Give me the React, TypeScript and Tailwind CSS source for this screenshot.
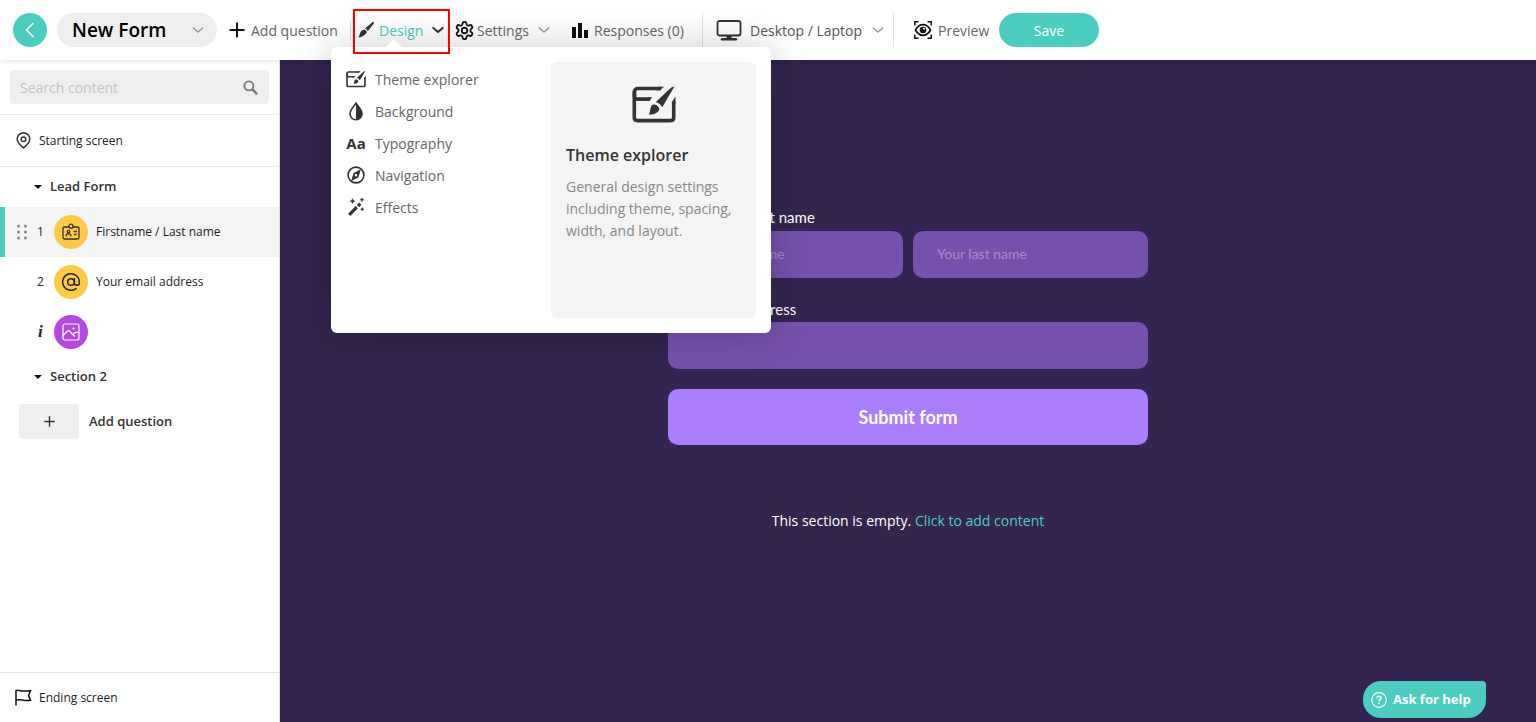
import type { ReactNode } from "react";
import { AtSign } from "lucide-react";

const menu = [
  { label: "Theme explorer", icon: <ThemeIcon className="h-5 w-5" /> },
  { label: "Background", icon: <DropIcon /> },
  { label: "Typography", icon: <span className="text-[15px] font-bold">Aa</span> },
  { label: "Navigation", icon: <CompassIcon /> },
  { label: "Effects", icon: <WandIcon /> },
];

const questions = [
  { id: "1", label: "Firstname / Last name", color: "bg-[#ffca45]", icon: <BadgeIcon />, selected: true },
  { id: "2", label: "Your email address", color: "bg-[#ffca45]", icon: <AtSign size={20} strokeWidth={1.8} />, selected: false },
];

function Chevron({ className = "stroke-[1.5] text-[#999]" }: { className?: string }) {
  return (
    <svg viewBox="0 0 12 8" className={`h-2 w-3 shrink-0 ${className}`} fill="none" stroke="currentColor">
      <path d="M1.300 2l4.700 4 4.700-4" strokeLinecap="round" strokeLinejoin="round" />
    </svg>
  );
}

function PlusIcon({ className }: { className: string }) {
  return (
    <svg viewBox="0 0 16 16" className={className} fill="none" stroke="currentColor">
      <path d="M8 .5v15M.5 8h15" />
    </svg>
  );
}

function BrushIcon() {
  return (
    <svg viewBox="0 0 16 16" className="h-4 w-4 shrink-0" fill="#333">
      <path d="M15.700.3c.4.400.2 1-.1 1.500L9.800 9.300C9.400 8.100 8.200 6.900 7 6.500L14.100.5c.6-.5 1.200-.6 1.600-.2z" />
      <path d="M6.100 7.400c1.400.3 2.500 1.500 2.700 2.800-.7 1.500-1.400 2.100-2.600 3-1.600 1.200-3.800 2-6 2.100 1.200-1.400 1.300-2.400 1.800-3.900.6-1.900 2-3.900 4.100-4z" />
    </svg>
  );
}

function ThemeIcon({ className }: { className: string }) {
  return (
    <svg viewBox="0 0 44 44" className={className}>
      <g fill="none" stroke="#333" strokeWidth="3.600">
        <path d="M29 6.500H6a3.500 3.500 0 0 0-3.700 3.500v25.500c0 2 1.300 3.100 3.300 3.100h32.800c2 0 3.300-1.200 3.300-3.100V20" />
        <path d="M2.500 9v5.500c0 1.600 1 2.600 2.800 2.600H18" />
      </g>
      <path fill="#333" d="M27 4.700h5l-4 3.600h-5zM16 15.300h4.300l-3 3.600H14zM43.500 14.500v7h-3.600v-1.500z" />
      <path fill="#333" d="M42.600 4.200L30.200 25.300c-1.400-2.700-3.600-4.600-6.400-5.300L39.200 5.500zM21.800 22.600c2.800 0 5.300 2.300 5.600 4.900-1.600 3.700-5.300 5.300-10.600 5 1.600-2.500.9-4.300 1.900-7.100.6-1.600 1.500-2.600 3.100-2.800z" />
    </svg>
  );
}

function DropIcon() {
  return (
    <svg viewBox="0 0 20 20" className="h-5 w-5">
      <path d="M10 2.200C8 5.200 4 8.700 4 12.700a6 6 0 0 0 12 0C16 8.700 12 5.200 10 2.200z" fill="none" stroke="#333" strokeWidth="1.600" />
      <path d="M10 2.200c2 3 6 6.500 6 10.500a6 6 0 0 1-6 6z" fill="#333" />
    </svg>
  );
}

function CompassIcon() {
  return (
    <svg viewBox="0 0 20 20" className="h-5 w-5">
      <circle cx="10" cy="10" r="7.900" fill="none" stroke="#333" strokeWidth="1.600" />
      <path fillRule="evenodd" fill="#333" d="M14.900 4.300l-2.500 8.100-7.300 3.700 2.500-8.100zM10 9a1.200 1.200 0 1 0 0 2.400A1.200 1.200 0 0 0 10 9z" />
    </svg>
  );
}

function WandIcon() {
  return (
    <svg viewBox="0 0 20 20" className="h-5 w-5" stroke="#333" fill="#333">
      <path d="M3.200 17.800l7.600-7.600M12 9l2.300-2.300" strokeWidth="3.200" fill="none" />
      <path strokeWidth=".6" d="M6.500 1.700l.7 1.700 1.700.7-1.700.7-.7 1.700-.7-1.700-1.700-.7 1.700-.7zM16 1l.5 1.300 1.300.5-1.300.5L16 4.600l-.5-1.300-1.300-.5 1.300-.5zM16.300 10.500l.5 1.200 1.200.5-1.200.5-.5 1.200-.5-1.200-1.200-.5 1.200-.5z" />
    </svg>
  );
}

function GearIcon() {
  return (
    <svg viewBox="1 1 22 22" className="h-[19px] w-[19px] shrink-0" fill="none" stroke="#111" strokeWidth="2.100">
      <path d="M12.220 2h-.44a2 2 0 0 0-2 2v.18a2 2 0 0 1-1 1.730l-.43.25a2 2 0 0 1-2 0l-.15-.08a2 2 0 0 0-2.730.73l-.22.38a2 2 0 0 0 .73 2.730l.15.1a2 2 0 0 1 1 1.720v.51a2 2 0 0 1-1 1.740l-.15.09a2 2 0 0 0-.73 2.730l.22.38a2 2 0 0 0 2.730.73l.15-.08a2 2 0 0 1 2 0l.43.25a2 2 0 0 1 1 1.730V20a2 2 0 0 0 2 2h.44a2 2 0 0 0 2-2v-.18a2 2 0 0 1 1-1.730l.43-.25a2 2 0 0 1 2 0l.15.08a2 2 0 0 0 2.730-.73l.22-.39a2 2 0 0 0-.73-2.730l-.15-.08a2 2 0 0 1-1-1.740v-.5a2 2 0 0 1 1-1.740l.15-.09a2 2 0 0 0 .73-2.730l-.22-.38a2 2 0 0 0-2.730-.73l-.15.08a2 2 0 0 1-2 0l-.43-.25a2 2 0 0 1-1-1.730V4a2 2 0 0 0-2-2z" />
      <circle cx="12" cy="12" r="3.200" />
    </svg>
  );
}

function PinIcon() {
  return (
    <svg viewBox="0 0 17 17" className="h-[17px] w-[17px]" fill="none" stroke="#333" strokeWidth="1.500">
      <path d="M8.500 16c-1.300-1.400-6.300-4.400-6.300-8.900a6.300 6.300 0 0 1 12.600 0c0 4.500-5 7.500-6.300 8.900z" strokeLinejoin="round" />
      <circle cx="8.500" cy="7.200" r="2.300" />
    </svg>
  );
}

function BadgeIcon() {
  return (
    <svg viewBox="0 0 20 20" className="h-5 w-5" fill="none" stroke="#333" strokeWidth="1.300">
      <path d="M8 5H3.500C2.400 5 2 5.700 2 6.500v9c0 .9.500 1.500 1.500 1.500h13c1 0 1.500-.6 1.500-1.500v-9c0-.9-.5-1.500-1.500-1.500H12" />
      <circle cx="10" cy="4.200" r="2" />
      <circle cx="7.500" cy="9.600" r="1.300" />
      <path d="M5 14.300c.2-1.700 1.200-2.600 2.500-2.600s2.300.9 2.500 2.600M12.500 9.500H16M13 12.500h2.500" />
    </svg>
  );
}

function PictureIcon() {
  return (
    <svg viewBox="0 0 20 20" className="h-5 w-5" fill="none" stroke="currentColor" strokeWidth="1.200">
      <rect x="2" y="2" width="16" height="16" rx="2" />
      <path d="M2 13.500L6.500 9c.6-.6 1.400-.6 2 0l3.500 4c.6-2 3-3.700 6-2.200M11.500 12.300l2.300 2.200" />
      <circle cx="12.500" cy="6.500" r=".5" fill="currentColor" />
    </svg>
  );
}

function MonitorIcon() {
  return (
    <svg viewBox="0 0 26 22" className="h-[22px] w-[26px] shrink-0" fill="none" stroke="#333" strokeWidth="1.800">
      <rect x="1.500" y="2" width="23" height="14.500" rx="2" />
      <path d="M6 20.300h14" strokeWidth="2.400" strokeLinecap="round" />
      <path d="M13 17v3" strokeWidth="5" />
    </svg>
  );
}

function PreviewIcon() {
  return (
    <svg viewBox="0 0 18 18" className="h-[18px] w-[18px] shrink-0" fill="none" stroke="#111">
      <path strokeWidth="1.500" d="M.8 4.500V.8h3.700M13.500.8h3.700v3.700M17.200 13.500v3.700h-3.700M4.500 17.200H.8v-3.700" />
      <path strokeWidth="1.700" d="M1.500 9C3.400 5.500 6 3.700 9 3.700s5.600 1.800 7.500 5.300c-1.900 3.500-4.500 5.300-7.500 5.300S3.400 12.500 1.500 9z" />
      <circle cx="9" cy="9" r="3.300" fill="#111" stroke="none" />
      <circle cx="10" cy="7.800" r="1" fill="#fff" stroke="none" />
    </svg>
  );
}

function Circle({ color, children }: { color: string; children: ReactNode }) {
  return <span className={`flex h-[34px] w-[34px] shrink-0 items-center justify-center rounded-full ${color}`}>{children}</span>;
}

function SectionTitle({ children }: { children: ReactNode }) {
  return (
    <button className="flex h-10 w-full items-center gap-2 pl-[34px] text-[13px] font-semibold text-[#333]">
      <svg viewBox="0 0 8 4" className="h-1 w-2" fill="#111">
        <path d="M0 0h8L4 4z" />
      </svg>
      {children}
    </button>
  );
}

function DesignMenu() {
  return (
    <div className="absolute top-[47px] -left-5 z-20 flex w-[440px] rounded-md bg-white p-[15px] shadow-[0_0_40px_rgba(0,0,0,0.2)]">
      <div className="absolute -top-2 left-[55px] h-0 w-0 border-x-8 border-b-8 border-x-transparent border-b-white" />
      <ul className="flex w-[205px] flex-col pt-px">
        {menu.map((m) => (
          <li key={m.label}>
            <button className="flex h-8 items-center gap-[9px] text-[14px] text-[#666]">
              <span className="flex w-5 justify-center text-[#333]">{m.icon}</span>
              {m.label}
            </button>
          </li>
        ))}
      </ul>
      <div className="h-64 flex-1 rounded-md bg-[#f4f4f4] px-[15px] pt-5">
        <ThemeIcon className="mx-auto h-11 w-11" />
        <h3 className="mt-[17px] text-base leading-6 font-semibold text-[#333]">Theme explorer</h3>
        <p className="mt-[9px] text-[14px] leading-[22px] text-[#888]">
          General design settings including theme, spacing, width, and layout.
        </p>
      </div>
    </div>
  );
}

function Header() {
  return (
    <header className="relative z-10 flex h-[60px] shrink-0 items-center bg-white pl-[13px] text-[14px] text-[#666] shadow-[0_0_6px_rgba(0,0,0,0.15)]">
      <button aria-label="Back" className="flex h-[34px] w-[34px] items-center justify-center rounded-full bg-[#4bcdc1]">
        <svg viewBox="0 0 10 16" className="h-4 w-[10px]" fill="none" stroke="#fff" strokeWidth="1.500">
          <path d="M8.500 1L1.500 8l7 7" />
        </svg>
      </button>
      <button className="ml-[10px] flex h-[34px] w-40 items-center justify-between rounded-full bg-[#eee] pr-[13px] pl-[15px] text-[19px] font-semibold text-black">
        New Form
        <Chevron />
      </button>
      <button className="ml-3 flex w-[121px] items-center gap-[6px] whitespace-nowrap">
        <PlusIcon className="h-4 w-4 shrink-0 stroke-2 text-[#111]" />
        Add question
      </button>
      <div className="h-[18px] w-px bg-[#ddd]" />
      <div className="relative flex h-[60px] w-[104px] items-center">
        <button className="flex w-full items-center pl-[7px] text-[#4bcdc1]">
          <BrushIcon />
          <span className="ml-[5px] flex-1 text-left">Design</span>
          <Chevron className="mr-[11px] stroke-2 text-[#333]" />
        </button>
        <DesignMenu />
        <div className="pointer-events-none absolute top-[9px] left-[2px] z-30 h-[45px] w-[97px] border-2 border-[#f00]" />
      </div>
      <button className="flex w-[95px] items-center">
        <GearIcon />
        <span className="ml-[3px] flex-1 text-left">Settings</span>
        <Chevron />
      </button>
      <button className="ml-[22px] flex w-[130px] items-center gap-[6px] whitespace-nowrap">
        <svg viewBox="0 0 16 15" className="h-[15px] w-4 shrink-0" fill="#111">
          <path d="M0 4h4v11H0zM6 0h4v15H6zM12 7h4v8h-4z" />
        </svg>
        Responses (0)
      </button>
      <div className="h-[34px] w-px bg-[#e3e3e3]" />
      <button className="ml-[13px] flex w-[168px] items-center whitespace-nowrap">
        <MonitorIcon />
        <span className="ml-2 flex-1 text-left font-medium text-[#555]">Desktop / Laptop</span>
        <Chevron />
      </button>
      <div className="ml-[9px] h-[34px] w-px bg-[#e3e3e3]" />
      <button className="ml-5 flex w-[85px] items-center gap-[6px]">
        <PreviewIcon />
        Preview
      </button>
      <button className="h-[34px] w-[100px] rounded-full bg-[#4bcdc1] text-white">Save</button>
    </header>
  );
}

function Sidebar() {
  return (
    <aside className="flex w-[280px] shrink-0 flex-col border-r border-[#ddd] bg-white text-[12px] text-[#222]">
      <div className="border-b border-[#e8e8e8] p-[10px]">
        <div className="flex h-[34px] items-center rounded bg-[#efefef] pr-[11px] pl-[10px]">
          <input
            type="search"
            aria-label="Search content"
            placeholder="Search content"
            className="min-w-0 flex-1 bg-transparent text-[14px] outline-none placeholder:text-[#c4c4c4]"
          />
          <svg viewBox="0 0 16 16" className="h-[15px] w-[15px]" fill="none" stroke="#777">
            <circle cx="6.300" cy="6.300" r="4.800" strokeWidth="2" />
            <path d="M10 10l5 5" strokeWidth="2.600" />
          </svg>
        </div>
      </div>
      <button className="flex h-[52px] items-center gap-[7px] border-b border-[#e8e8e8] pl-[15px]">
        <PinIcon />
        Starting screen
      </button>
      <SectionTitle>Lead Form</SectionTitle>
      <ul>
        {questions.map((q) => (
          <li
            key={q.id}
            className={`flex h-[50px] items-center ${q.selected ? "border-l-[5px] border-[#4bcdc1] bg-[#f4f4f4]" : "pl-[5px]"}`}
          >
            <span className="flex w-8 justify-start pl-3">
              {q.selected && (
                <svg viewBox="0 0 10 16" className="h-4 w-[10px]" fill="#888">
                  <circle cx="1.500" cy="2" r="1.500" />
                  <circle cx="8.500" cy="2" r="1.500" />
                  <circle cx="1.500" cy="8" r="1.500" />
                  <circle cx="8.500" cy="8" r="1.500" />
                  <circle cx="1.500" cy="14" r="1.500" />
                  <circle cx="8.500" cy="14" r="1.500" />
                </svg>
              )}
            </span>
            <span className="w-[17px]">{q.id}</span>
            <Circle color={q.color}>{q.icon}</Circle>
            <span className="ml-2">{q.label}</span>
          </li>
        ))}
        <li className="flex h-[50px] items-center pl-[38px]">
          <span className="w-4 font-['Liberation_Serif',serif] text-[17px] font-bold italic">i</span>
          <Circle color="bg-[#b348e4] text-white">
            <PictureIcon />
          </Circle>
        </li>
      </ul>
      <SectionTitle>Section 2</SectionTitle>
      <button className="mt-[7px] flex items-center gap-[10px] pl-[19px] text-[13px] font-semibold text-[#333]">
        <span className="flex h-[35px] w-[60px] items-center justify-center rounded bg-[#efefef]">
          <PlusIcon className="h-[11px] w-[11px] stroke-2" />
        </span>
        Add question
      </button>
      <button className="mt-auto flex h-[50px] items-center gap-[7px] border-t border-[#e3e3e3] pl-[15px]">
        <svg viewBox="0 0 17 17" className="h-[17px] w-[17px]" fill="none" stroke="#111" strokeWidth="1.500">
          <path d="M1 16.500V1.500c3-.8 4.500.6 7.500.6 2.500 0 4.500-.3 7-.3l-2 4.600 2 4.800c-3 .4-5 .2-7 0-2.500-.4-4.500-.9-7.500-.1" />
        </svg>
        Ending screen
      </button>
    </aside>
  );
}

const field = "h-[47px] w-full min-w-0 rounded-[10px] bg-[#7551ad] px-6 pb-[3px] text-[14px] text-white outline-none placeholder:text-[#a58bcb]";

function Canvas() {
  return (
    <main className="relative flex-1 bg-[#342450]">
      <form className="mx-auto w-[480px] pt-[146px] font-['Lato',sans-serif] text-white">
        <label htmlFor="first" className="mb-[3px] block text-[15px] leading-[22px]">
          Firstname / Last name
        </label>
        <div className="flex gap-[10px]">
          <input id="first" className={field} placeholder="Your first name" />
          <input aria-label="Last name" className={field} placeholder="Your last name" />
        </div>
        <label htmlFor="email" className="mt-5 mb-[2px] block text-[15px] leading-[22px]">
          Your e-mail address
        </label>
        <input id="email" type="email" className={field} />
        <button type="button" className="mt-5 h-14 w-full rounded-[10px] bg-[#ac7dff] text-[18px] font-bold">
          Submit form
        </button>
      </form>
      <p className="mt-16 text-center text-[14px] leading-6 text-white">
        This section is empty.{" "}
        <a href="#" className="text-[#4bcdc1]">
          Click to add content
        </a>
      </p>
      <button className="absolute right-[50px] bottom-1 flex h-[37px] w-[123px] items-center gap-[6px] rounded-[18px] rounded-tr bg-[#4bcdc1] pl-2 text-[13px] font-bold whitespace-nowrap text-white">
        <svg viewBox="0 0 16 16" className="h-4 w-4 shrink-0" fill="none" stroke="#fff" strokeWidth="1.200">
          <circle cx="8" cy="8" r="7.300" />
          <path d="M6 6.200c0-1.300.9-2 2-2s2 .8 2 1.900c0 1.500-2 1.500-2 3.200M8 10.600v1.400" strokeWidth="1.400" />
        </svg>
        Ask for help
      </button>
    </main>
  );
}

export default function App() {
  return (
    <div className="flex h-screen flex-col font-['Open_Sans','Noto_Sans',sans-serif]">
      <Header />
      <div className="flex min-h-0 flex-1">
        <Sidebar />
        <Canvas />
      </div>
    </div>
  );
}
